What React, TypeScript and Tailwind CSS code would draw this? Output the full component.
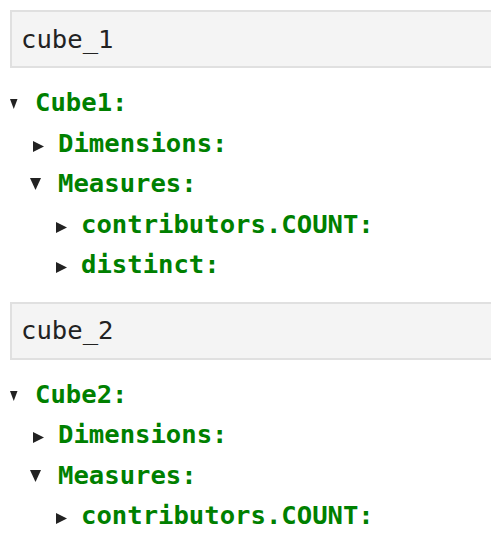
type Node = { label: string; open?: boolean; children?: Node[] };

const cubes: { name: string; tree: Node }[] = [
  {
    name: 'cube_1',
    tree: {
      label: 'Cube1:',
      open: true,
      children: [
        { label: 'Dimensions:' },
        {
          label: 'Measures:',
          open: true,
          children: [{ label: 'contributors.COUNT:' }, { label: 'distinct:' }],
        },
      ],
    },
  },
  {
    name: 'cube_2',
    tree: {
      label: 'Cube2:',
      open: true,
      children: [
        { label: 'Dimensions:' },
        { label: 'Measures:', open: true, children: [{ label: 'contributors.COUNT:' }] },
      ],
    },
  },
];

function Caret({ open, level }: { open?: boolean; level: number }) {
  return (
    <svg width="25" height="40" className="block shrink-0 overflow-visible">
      {!open && <polygon points="0,18 11,23.5 0,29" fill="#222" />}
      {open && level === 0 && <polygon points="0,17 7.5,17 3.75,27" fill="#222" />}
      {open && level > 0 && <polygon points="-3,15 8,15 2.5,27" fill="#222" />}
    </svg>
  );
}

function TreeRow({ node, level }: { node: Node; level: number }) {
  return (
    <>
      <div className="flex h-[40.5px] items-start" style={{ paddingLeft: 10 + level * 23 }}>
        <Caret open={node.open} level={level} />
        <span className="font-bold leading-[40.5px] text-[#008000]">{node.label}</span>
      </div>
      {node.open && node.children?.map((c) => <TreeRow key={c.label} node={c} level={level + 1} />)}
    </>
  );
}

function CubeHeader({ name }: { name?: string }) {
  return (
    <div className="ml-[10px] flex h-[58px] w-[600px] items-center border-2 border-[#e0e0e0] bg-[#f4f4f4] pl-[9px] text-[#222]">
      {name}
    </div>
  );
}

export default function App() {
  return (
    <div
      className="h-[553px] w-[491px] overflow-hidden bg-white pt-[10px] text-[25.6px]"
      style={{ fontFamily: '"DejaVu Sans Mono", monospace' }}
    >
      {cubes.map((c) => (
        <div key={c.name}>
          <CubeHeader name={c.name} />
          <div className="mt-[14px] mb-[17px]">
            <TreeRow node={c.tree} level={0} />
          </div>
        </div>
      ))}
      {/* next cube header starts at the bottom edge */}
      <CubeHeader />
    </div>
  );
}
